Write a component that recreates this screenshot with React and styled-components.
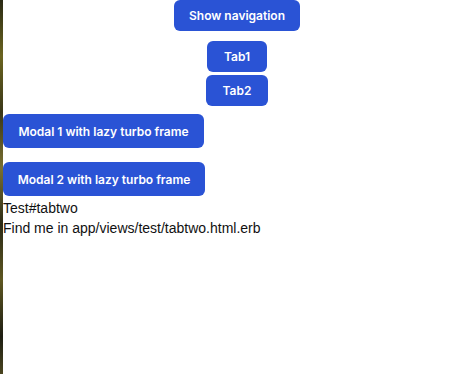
import styled, { createGlobalStyle } from "styled-components";

const GlobalStyle = createGlobalStyle`
	html, body {
		margin: 0;
		padding: 0;
		background: #ffffff;
	}
	body {
		font-family: "Liberation Sans", Arial, sans-serif;
	}
`;

export default function App() {
	return (
		<>
			<GlobalStyle />
			<Page>
				<Edge />
				<Main>
					<Nav>
						<Button $w="126px">Show navigation</Button>
						<Tabs>
							<Button $w="60px">Tab1</Button>
							<Button $w="62px">Tab2</Button>
						</Tabs>
					</Nav>
					<Modals>
						<Button $w="201px" $h="34px">
							Modal 1 with lazy turbo frame
						</Button>
						<Button $w="202px" $h="34px">
							Modal 2 with lazy turbo frame
						</Button>
					</Modals>
					<Content>
						<p>Test#tabtwo</p>
						<p>Find me in app/views/test/tabtwo.html.erb</p>
					</Content>
				</Main>
			</Page>
		</>
	);
}

const Page = styled.div`
	display: flex;
	width: 100vw;
	height: 100vh;
	background: #ffffff;
`;

const Edge = styled.div`
	width: 3px;
	flex-shrink: 0;
	background: linear-gradient(
		180deg,
		#2a2a14 0%,
		#6b6420 15%,
		#3a3718 30%,
		#7a7030 45%,
		#2b2a16 60%,
		#5e5722 75%,
		#1e1e12 90%,
		#4a4520 100%
	);
`;

const Main = styled.main`
	flex: 1;
	display: flex;
	flex-direction: column;
`;

const Nav = styled.nav`
	display: flex;
	flex-direction: column;
	align-items: center;
	gap: 10px;
	padding-right: 3px;
`;

const Tabs = styled.div`
	display: flex;
	flex-direction: column;
	align-items: center;
	gap: 3px;
`;

const Modals = styled.div`
	display: flex;
	flex-direction: column;
	align-items: flex-start;
	gap: 14px;
	margin-top: 8px;
`;

const Button = styled.button`
	width: ${(p) => p.$w};
	height: ${(p) => p.$h || "31px"};
	display: flex;
	align-items: center;
	justify-content: center;
	padding: 0;
	border: none;
	border-radius: 6px;
	background: #2a53d5;
	color: #ffffff;
	font-family: Inter, "Liberation Sans", sans-serif;
	font-size: 12px;
	font-weight: 600;
	cursor: pointer;
`;

const Content = styled.div`
	margin-top: 2px;
	color: #111111;
	font-size: 14px;
	line-height: 20px;

	p {
		margin: 0;
	}
`;
